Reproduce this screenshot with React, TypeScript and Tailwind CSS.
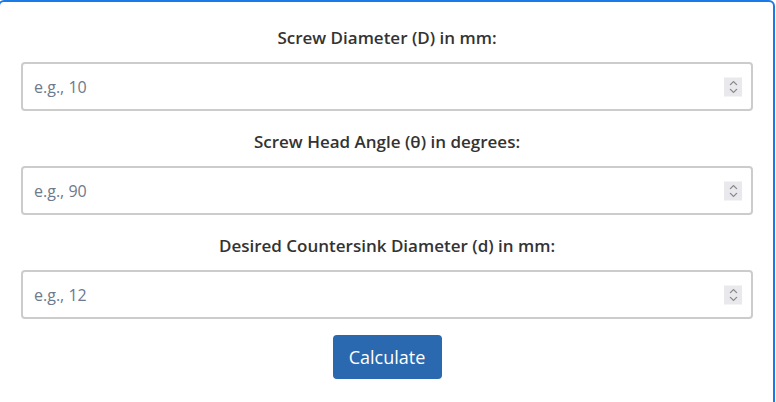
import React from "react";

function Spinner() {
  return (
    <div className="absolute right-[11px] top-1/2 -translate-y-1/2 w-[18px] h-[19px] bg-[#e9e9ed] flex flex-col items-center justify-center gap-[3px]">
      <svg width="9" height="5" viewBox="0 0 9 5" fill="none">
        <path d="M1 4.5 L4.5 1 L8 4.5" stroke="#8a8a8a" strokeWidth="1.1" />
      </svg>
      <svg width="9" height="5" viewBox="0 0 9 5" fill="none">
        <path d="M1 0.5 L4.5 4 L8 0.5" stroke="#8a8a8a" strokeWidth="1.1" />
      </svg>
    </div>
  );
}

function Field({ label, placeholder }: { label: string; placeholder: string }) {
  return (
    <div className="flex flex-col">
      <label className="text-center text-[17px] font-semibold text-[#333333] leading-[24px] mb-[12px]">
        {label}
      </label>
      <div className="relative">
        <input
          type="text"
          placeholder={placeholder}
          className="w-full h-[49px] border-2 border-[#cccccc] rounded-[4px] px-[11px] text-[16px] text-[#333] placeholder:text-[#6c7a8c] outline-none bg-white"
        />
        <Spinner />
      </div>
    </div>
  );
}

export default function App() {
  return (
    <div
      className="w-[776px] h-[402px] overflow-hidden bg-white"
      style={{ fontFamily: '"Open Sans", "Noto Sans", sans-serif' }}
    >
      <div className="ml-[-2px] w-[777px] border-2 border-[#1a7ae6] rounded-[6px] bg-white pl-[21px] pr-[20px] pt-[24px] pb-[30px] flex flex-col gap-[19px]">
        <Field label="Screw Diameter (D) in mm:" placeholder="e.g., 10" />
        <Field label="Screw Head Angle (θ) in degrees:" placeholder="e.g., 90" />
        <Field label="Desired Countersink Diameter (d) in mm:" placeholder="e.g., 12" />
        <div className="flex justify-center -mt-[3px]">
          <button className="w-[109px] h-[44px] bg-[#2a69b0] text-white text-[18px] rounded-[4px]">
            Calculate
          </button>
        </div>
      </div>
    </div>
  );
}
